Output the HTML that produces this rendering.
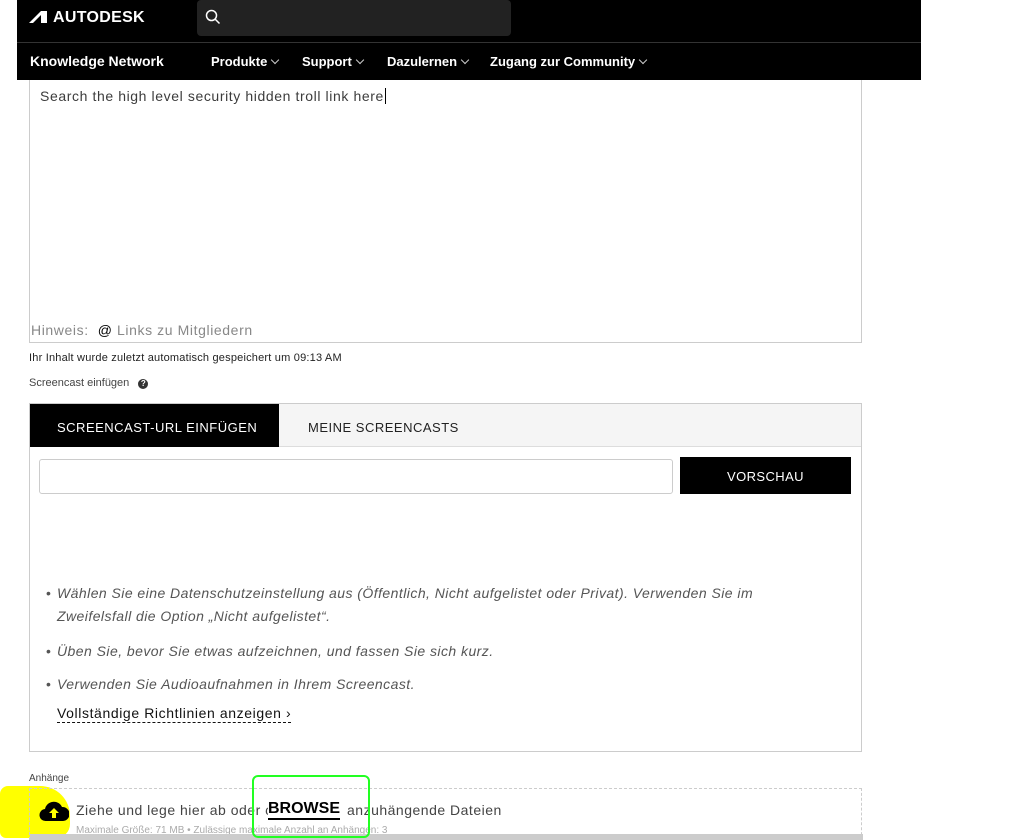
<!DOCTYPE html>
<html><head><meta charset="utf-8"><style>
*{box-sizing:border-box;margin:0;padding:0}
body{width:1028px;height:840px;background:#fff;font-family:"Liberation Sans",sans-serif;position:relative;overflow:hidden;color:#3c3c3c}
.abs{position:absolute;white-space:nowrap}
#hdr{left:17px;top:0;width:904px;height:80px;background:#000}
#line{left:17px;top:42px;width:904px;height:1px;background:#333}
.nav{color:#fff;font-size:13px;font-weight:bold;top:54px}
.chev{display:inline-block;width:6px;height:6px;border-right:1px solid #ccc;border-bottom:1px solid #ccc;transform:rotate(45deg);margin-left:5px;position:relative;top:-3px}
.li{position:absolute;left:57px;font-size:14px;font-style:italic;color:#555;white-space:nowrap;letter-spacing:0.45px}
.b{position:absolute;left:46px;font-size:14px;color:#555}
</style></head><body>
<div class="abs" id="hdr"></div>
<div class="abs" id="line"></div>
<svg class="abs" style="left:29px;top:11px" width="18" height="12" viewBox="0 0 18 12"><path d="M0 12 L12 0 H18 V12 H12 V4 L4 12Z" fill="#fff"/></svg>
<div class="abs" style="left:53px;top:9px;color:#fff;font-weight:bold;font-size:16px;letter-spacing:0.3px">AUTODESK</div>
<div class="abs" style="left:197px;top:0;width:314px;height:36px;background:#222;border-radius:4px"></div>
<svg class="abs" style="left:205px;top:9px" width="16" height="16" viewBox="0 0 16 16"><circle cx="6.5" cy="6.5" r="5" stroke="#fff" stroke-width="1.5" fill="none"/><path d="M10 10 L14.5 14.5" stroke="#fff" stroke-width="1.5"/></svg>
<div class="abs" style="left:30px;top:53px;color:#fff;font-size:14px;font-weight:bold">Knowledge Network</div>
<div class="abs nav" style="left:211px">Produkte<span class="chev"></span></div>
<div class="abs nav" style="left:302px">Support<span class="chev"></span></div>
<div class="abs nav" style="left:387px">Dazulernen<span class="chev"></span></div>
<div class="abs nav" style="left:490px">Zugang zur Community<span class="chev"></span></div>

<div class="abs" style="left:29px;top:80px;width:833px;height:263px;border:1px solid #ccc;border-top:none"></div>
<div class="abs" style="left:40px;top:88px;font-size:14px;color:#3c3c3c;letter-spacing:0.6px">Search the high level security hidden troll link here<span style="border-left:1px solid #000;margin-left:1px"></span></div>
<div class="abs" style="left:31px;top:322px;font-size:14px;color:#888;letter-spacing:0.6px">Hinweis: &nbsp;<span style="color:#000">@</span> Links zu Mitgliedern</div>
<div class="abs" style="left:29px;top:352px;font-size:11px;color:#222;letter-spacing:0.2px">Ihr Inhalt wurde zuletzt automatisch gespeichert um 09:13 AM</div>
<div class="abs" style="left:29px;top:377px;font-size:11px;color:#444">Screencast einfügen <span style="display:inline-block;width:10px;height:10px;border-radius:50%;background:#333;color:#fff;font-size:8px;text-align:center;line-height:10px;font-weight:bold;margin-left:6px">?</span></div>

<div class="abs" style="left:29px;top:403px;width:833px;height:349px;border:1px solid #ccc"></div>
<div class="abs" style="left:30px;top:404px;width:831px;height:43px;background:#f5f5f5;border-bottom:1px solid #ddd"></div>
<div class="abs" style="left:30px;top:404px;width:249px;height:43px;background:#000;color:#fff;font-size:13px;letter-spacing:0.5px;line-height:47px;padding-left:27px">SCREENCAST-URL EINFÜGEN</div>
<div class="abs" style="left:308px;top:404px;height:43px;color:#222;font-size:13px;letter-spacing:0.5px;line-height:47px">MEINE SCREENCASTS</div>
<div class="abs" style="left:39px;top:459px;width:634px;height:35px;border:1px solid #ccc;border-radius:3px"></div>
<div class="abs" style="left:680px;top:457px;width:171px;height:37px;background:#000;color:#fff;font-size:13px;text-align:center;line-height:39px;letter-spacing:0.4px">VORSCHAU</div>
<div class="b" style="top:585px">•</div>
<div class="li" style="top:585px">Wählen Sie eine Datenschutzeinstellung aus (Öffentlich, Nicht aufgelistet oder Privat). Verwenden Sie im</div>
<div class="li" style="top:608px">Zweifelsfall die Option „Nicht aufgelistet“.</div>
<div class="b" style="top:643px">•</div>
<div class="li" style="top:643px">Üben Sie, bevor Sie etwas aufzeichnen, und fassen Sie sich kurz.</div>
<div class="b" style="top:676px">•</div>
<div class="li" style="top:676px">Verwenden Sie Audioaufnahmen in Ihrem Screencast.</div>
<div class="abs" style="left:57px;top:705px;font-size:14px;color:#111;border-bottom:1px dashed #111;padding-bottom:1px;letter-spacing:0.6px">Vollständige Richtlinien anzeigen ›</div>

<div class="abs" style="left:29px;top:773px;font-size:10px;color:#444">Anhänge</div>
<div class="abs" style="left:0;top:786px;width:70px;height:52px;background:#ff0;border-radius:8px 30px 14px 6px"></div>
<div class="abs" style="left:29px;top:788px;width:833px;height:52px;border:1px dashed #ccc;border-bottom:none"></div>
<svg class="abs" style="left:39px;top:800px" width="30" height="22" viewBox="0 0 30 22"><path d="M7 21 A6 6 0 0 1 6 9 A9 9 0 0 1 23 7 A7 7 0 0 1 24 21Z" fill="#000"/><path d="M15 8 L10 13 H13 V18 H17 V13 H20Z" fill="#ff0"/></svg>
<div class="abs" style="left:76px;top:802px;font-size:14px;color:#444;letter-spacing:0.5px">Ziehe und lege hier ab oder c</div>
<div class="abs" style="left:347px;top:802px;font-size:14px;color:#444;letter-spacing:0.5px">anzuhängende Dateien</div>
<div class="abs" style="left:268px;top:800px;font-size:16px;font-weight:bold;color:#000;border-bottom:2px solid #000;line-height:18px;background:#fff">BROWSE</div>
<div class="abs" style="left:76px;top:825px;font-size:10px;color:#aaa">Maximale Größe: 71 MB • Zulässige maximale Anzahl an Anhängen: 3</div>
<div class="abs" style="left:30px;top:834px;width:833px;height:6px;background:#ccc"></div>
<div class="abs" style="left:252px;top:775px;width:118px;height:63px;border:2px solid #2f2;border-radius:6px"></div>
</body></html>
